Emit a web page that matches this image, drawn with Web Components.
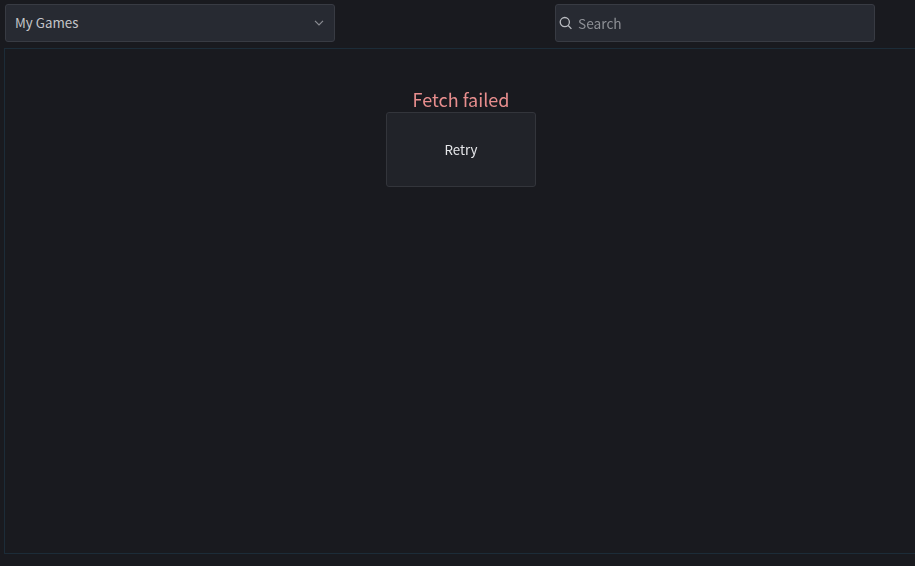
<!DOCTYPE html>
<html>
<head>
<meta charset="utf-8">
<title>My Games</title>
<style>
  html, body { margin: 0; height: 100%; }
  body {
    background: #191a1f;
    color: #e6e7ea;
    font-family: "Noto Sans CJK JP", "Noto Sans", sans-serif;
    overflow: hidden;
  }
</style>
</head>
<body>
<game-library></game-library>
<script>
class GameSelect extends HTMLElement {
  constructor() {
    super();
    this.attachShadow({ mode: 'open' });
    this.shadowRoot.innerHTML = `
      <style>
        :host {
          display: flex;
          align-items: center;
          justify-content: space-between;
          box-sizing: border-box;
          width: 330px;
          height: 38px;
          padding: 0 10px 0 9px;
          background: #272a32;
          border: 1px solid #383b43;
          border-radius: 3px;
          font-size: 13.33px;
          color: #c4c5c9;
        }
        span { margin-top: -2px; }
        svg { display: block; margin-top: -1px; }
      </style>
      <span><slot></slot></span>
      <svg width="10" height="6" viewBox="0 0 10 6" fill="none" stroke="#8b8d93" stroke-width="1.2"><path d="M1 .8 5 4.8 9 .8"/></svg>
    `;
  }
}

class SearchBox extends HTMLElement {
  constructor() {
    super();
    this.attachShadow({ mode: 'open' });
    this.shadowRoot.innerHTML = `
      <style>
        :host {
          display: flex;
          align-items: center;
          gap: 6px;
          box-sizing: border-box;
          width: 320px;
          height: 38px;
          padding: 0 3px;
          background: #272a32;
          border: 1px solid #383b43;
          border-radius: 3px;
          font-size: 13.7px;
          color: #8e9096;
        }
        svg { display: block; margin-top: -1px; }
        span { margin-top: -1px; }
      </style>
      <svg width="13" height="14" viewBox="0 0 13 14" fill="none" stroke="#b9bbc0" stroke-width="1.3"><circle cx="5.8" cy="6.1" r="4.6"/><path d="M9.2 9.5l3.2 3.4"/></svg>
      <span><slot></slot></span>
    `;
  }
}

class FetchError extends HTMLElement {
  constructor() {
    super();
    this.attachShadow({ mode: 'open' });
    this.shadowRoot.innerHTML = `
      <style>
        :host {
          display: flex;
          flex-direction: column;
          align-items: center;
          margin-top: 38px;
        }
        .msg {
          font-size: 18px;
          line-height: 25px;
          height: 25px;
          color: #e88e8e;
        }
        button {
          box-sizing: border-box;
          width: 150px;
          height: 75px;
          background: #212329;
          border: 1px solid #33353b;
          border-radius: 3px;
          color: #e6e7ea;
          font: inherit;
          font-size: 13.33px;
          padding: 0;
        }
      </style>
      <div class="msg"><slot></slot></div>
      <button>Retry</button>
    `;
  }
}

class GameLibrary extends HTMLElement {
  constructor() {
    super();
    this.attachShadow({ mode: 'open' });
    this.shadowRoot.innerHTML = `
      <style>
        /* own layer so text gets greyscale antialiasing like the original */
        :host { display: block; will-change: opacity; }
        .bar {
          display: flex;
          height: 38px;
          padding: 4px 0 0 5px;
          gap: 220px;
        }
        .panel {
          box-sizing: border-box;
          height: 506px;
          margin: 6px -3px 0 4px;
          border: 1px solid #1c2c38;
        }
      </style>
      <div class="bar">
        <game-select>My Games</game-select>
        <search-box>Search</search-box>
      </div>
      <div class="panel">
        <fetch-error>Fetch failed</fetch-error>
      </div>
    `;
  }
}

customElements.define('game-select', GameSelect);
customElements.define('search-box', SearchBox);
customElements.define('fetch-error', FetchError);
customElements.define('game-library', GameLibrary);
</script>
</body>
</html>
